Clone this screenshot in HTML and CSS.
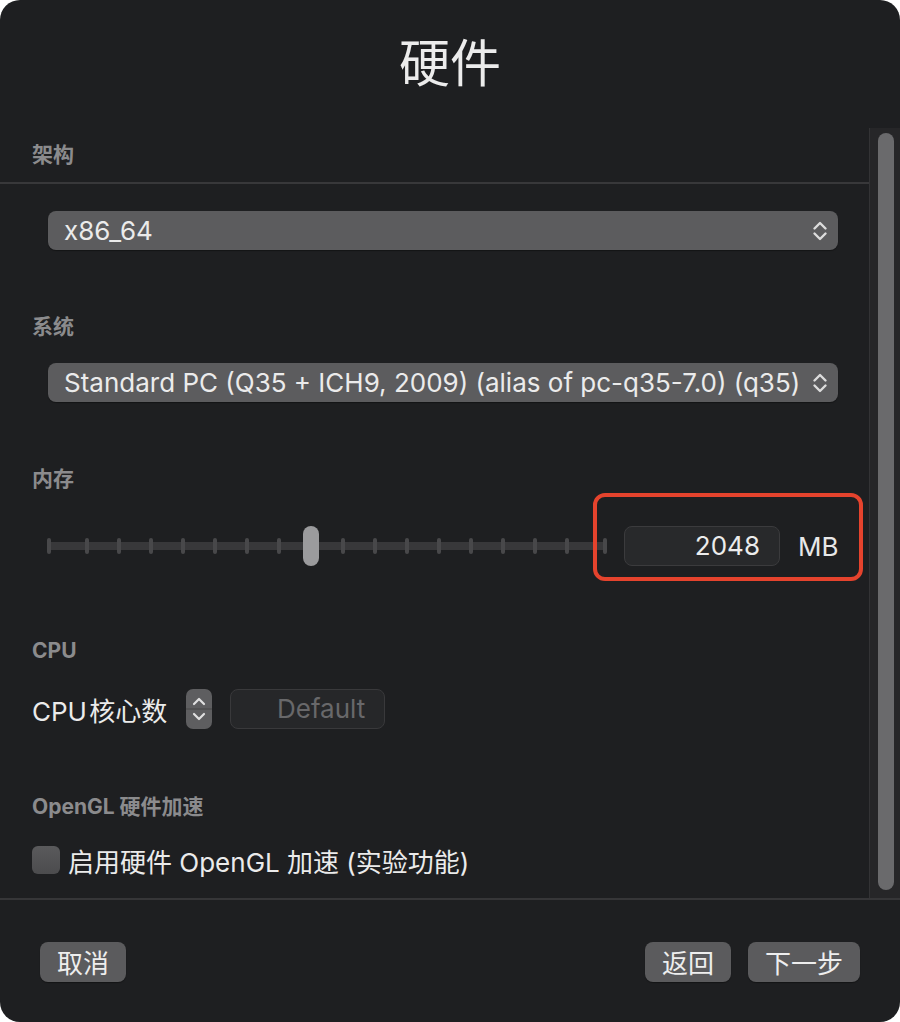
FILE: index.html
```html
<!DOCTYPE html>
<html lang="zh">
<head>
<meta charset="utf-8">
<title>硬件</title>
<link rel="stylesheet" href="styles.css">
</head>
<body>
<div class="window">
  <header class="title">硬件</header>
  <div class="main">
    <div class="content">
      <div class="section-head first">架构</div>
      <div class="popup">
        <span>x86_64</span>
        <svg class="chev" viewBox="0 0 16 22" width="16" height="22"><path d="M2.5 8.5 L8 3 L13.5 8.5 M2.5 13.5 L8 19 L13.5 13.5" fill="none" stroke="#dcdcdc" stroke-width="2.4" stroke-linecap="round" stroke-linejoin="round"/></svg>
      </div>

      <div class="section-head">系统</div>
      <div class="popup popup-tight">
        <span>Standard PC (Q35 + ICH9, 2009) (alias of pc-q35-7.0) (q35)</span>
        <svg class="chev" viewBox="0 0 16 22" width="16" height="22"><path d="M2.5 8.5 L8 3 L13.5 8.5 M2.5 13.5 L8 19 L13.5 13.5" fill="none" stroke="#dcdcdc" stroke-width="2.4" stroke-linecap="round" stroke-linejoin="round"/></svg>
      </div>

      <div class="section-head">内存</div>
      <div class="mem-row">
        <div class="slider">
          <div class="ticks">
            <i></i><i></i><i></i><i></i><i></i><i></i><i></i><i></i><i></i><i></i><i></i><i></i><i></i><i></i><i></i><i></i><i></i><i></i>
          </div>
          <div class="thumb"></div>
        </div>
        <div class="mem-field">2048</div>
        <div class="unit">MB</div>
        <div class="highlight"></div>
      </div>

      <div class="section-head head-cpu">CPU</div>
      <div class="cpu-row">
        <span class="cpu-label">CPU 核心数</span>
        <div class="stepper">
          <svg viewBox="0 0 26 40" width="26" height="40"><path d="M8 15 L13 10 L18 15" fill="none" stroke="#e0e0e0" stroke-width="2.2" stroke-linecap="round" stroke-linejoin="round"/><line x1="0" y1="20" x2="26" y2="20" stroke="#4c4c4c" stroke-width="1.2"/><path d="M8 25 L13 30 L18 25" fill="none" stroke="#e0e0e0" stroke-width="2.2" stroke-linecap="round" stroke-linejoin="round"/></svg>
        </div>
        <div class="cpu-field">Default</div>
      </div>

      <div class="section-head head-gl">OpenGL 硬件加速</div>
      <div class="check-row">
        <span class="checkbox"></span>
        <span class="check-label">启用硬件 OpenGL 加速 (实验功能)</span>
      </div>
    </div>
    <div class="scrollbar"><div class="scroll-thumb"></div></div>
  </div>
  <footer class="footer">
    <button class="btn">取消</button>
    <div class="spacer"></div>
    <button class="btn">返回</button>
    <button class="btn btn-next">下一步</button>
  </footer>
</div>
</body>
</html>
```

FILE: styles.css
```css
* { box-sizing: border-box; }
html, body { margin: 0; padding: 0; }
body {
  background: #ffffff;
  font-family: Inter, "Noto Sans CJK SC", sans-serif;
  color: #e6e6e6;
}
.window {
  width: 900px;
  height: 1022px;
  background: #1e1f21;
  border-radius: 20px;
  display: flex;
  flex-direction: column;
  overflow: hidden;
}
.title {
  height: 128px;
  flex: none;
  text-align: center;
  font-family: "Noto Sans CJK SC", sans-serif;
  font-weight: 400;
  font-size: 51px;
  line-height: 50px;
  padding-top: 35px;
  color: #ececec;
}
.main {
  height: 772px;
  flex: none;
  display: flex;
  border-bottom: 2px solid #363638;
}
.content {
  flex: 1;
  min-width: 0;
}
.section-head {
  font-size: 21px;
  font-weight: 700;
  color: #8b8b8d;
  line-height: 30px;
  height: 30px;
  padding-left: 32px;
  margin-top: 62px;
}
.section-head.first {
  margin-top: 0;
  height: 56px;
  padding-top: 12px;
  padding-bottom: 12px;
  border-bottom: 2px solid #38383a;
}
.section-head.head-cpu { margin-top: 70px; }
.section-head.head-gl { margin-top: 63px; }
.popup {
  margin: 27px 0 0 48px;
  width: 790px;
  height: 39px;
  background: #5c5c5e;
  border-radius: 8px;
  display: flex;
  align-items: center;
  justify-content: space-between;
  padding: 0 10px 0 16px;
  font-size: 26px;
  color: #ebebeb;
  box-shadow: 0 1px 1px rgba(0,0,0,0.35);
  white-space: nowrap;
}
.popup-tight { margin-top: 21px; }
.chev { flex: none; }

.mem-row {
  margin-top: 32px;
  height: 40px;
  display: flex;
  align-items: center;
  position: relative;
}
.slider {
  margin-left: 47px;
  width: 560px;
  height: 40px;
  position: relative;
  display: flex;
  align-items: center;
}
.ticks {
  width: 100%;
  height: 16px;
  display: flex;
  background: linear-gradient(transparent 4px, #38383a 4px, #38383a 12px, transparent 12px);
  border-radius: 2px;
}
.ticks i {
  display: block;
  width: 4px;
  height: 16px;
  background: #48484a;
  border-radius: 2px;
  margin-left: 28px;
}
.ticks i:first-child { margin-left: 0; }
.ticks i:nth-child(2) { margin-left: 34px; }
.ticks i:last-child { margin-left: 34px; }
.thumb {
  position: absolute;
  left: 256px;
  top: 0;
  width: 16px;
  height: 40px;
  border-radius: 8px;
  background: #9b9b9d;
}
.mem-field {
  margin-left: 17px;
  width: 156px;
  height: 40px;
  background: #28292b;
  border: 1px solid #3b3b3d;
  border-radius: 8px;
  text-align: right;
  padding-right: 19px;
  font-size: 26px;
  line-height: 38px;
  color: #ececec;
}
.unit {
  margin-left: 18px;
  font-size: 26px;
  color: #e8e8e8;
}
.highlight {
  position: absolute;
  left: 593px;
  top: -33px;
  width: 270px;
  height: 88px;
  border: 4px solid #e5432d;
  border-radius: 12px;
  pointer-events: none;
}

.cpu-row {
  margin-top: 23px;
  height: 40px;
  display: flex;
  align-items: center;
  padding-left: 32px;
}
.cpu-label {
  font-size: 26px;
  color: #ebebeb;
  white-space: nowrap;
  word-spacing: -5px;
}
.stepper {
  margin-left: 19px;
  width: 26px;
  height: 40px;
  background: #5e5e60;
  border-radius: 7px;
  flex: none;
}
.stepper svg { display: block; }
.cpu-field {
  margin-left: 18px;
  width: 155px;
  height: 40px;
  background: #262729;
  border: 1px solid #39393b;
  border-radius: 8px;
  text-align: right;
  padding-right: 19px;
  font-size: 26px;
  line-height: 38px;
  color: #68686a;
}
.check-row {
  margin-top: 24px;
  height: 28px;
  display: flex;
  align-items: center;
  padding-left: 32px;
}
.checkbox {
  width: 28px;
  height: 28px;
  border-radius: 6px;
  background: linear-gradient(#5a5a5c, #4c4c4e);
  flex: none;
}
.check-label {
  margin-left: 8px;
  font-size: 26px;
  color: #ebebeb;
  white-space: nowrap;
}

.scrollbar {
  width: 31px;
  flex: none;
  background: #262628;
  border-left: 1px solid #333335;
  padding: 5px 6px 8px 8px;
}
.scroll-thumb {
  width: 16px;
  height: 100%;
  border-radius: 8px;
  background: #6a6a6c;
}

.footer {
  flex: 1;
  display: flex;
  align-items: flex-start;
  padding: 42px 40px 0 40px;
}
.spacer { flex: 1; }
.btn {
  height: 40px;
  padding: 0 17px;
  background: #5b5b5d;
  border: none;
  border-radius: 8px;
  color: #eeeeee;
  font-family: "Noto Sans CJK SC", sans-serif;
  font-size: 26px;
  line-height: 40px;
  box-shadow: 0 1px 1px rgba(0,0,0,0.35);
}
.btn + .btn { margin-left: 17px; }
```
